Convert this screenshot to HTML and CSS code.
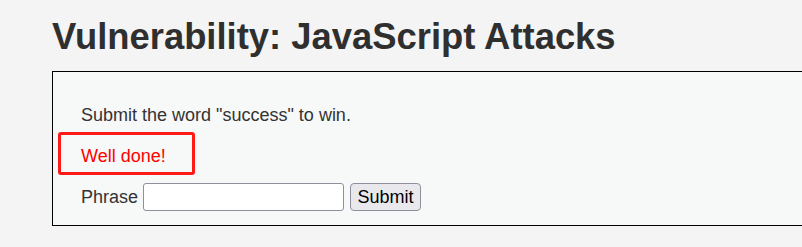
FILE: index.html
```html
<!DOCTYPE html>
<html lang="en">
<head>
    <meta charset="UTF-8">
    <title>Vulnerability: JavaScript Attacks</title>
    <link rel="stylesheet" href="styles.css">
</head>
<body>
    <div class="body-padded">
        <h1>Vulnerability: JavaScript Attacks</h1>

        <div class="vulnerable-code-area">
            <p class="intro">Submit the word "success" to win.</p>

            <div class="message">Well done!</div>

            <form name="low_js" class="phrase-row">
                <label for="phrase">Phrase</label>
                <input type="text" id="phrase" name="phrase">
                <button type="submit" id="send">Submit</button>
            </form>
        </div>
    </div>
</body>
</html>
```

FILE: styles.css
```css
html {
    overflow: hidden;
}

body {
    font-family: "Liberation Sans", Arial, sans-serif;
    background-color: #f4f4f4;
    color: #333;
    margin: 0;
    padding: 0;
}

.body-padded {
    padding-left: 52px;
}

h1 {
    font-size: 36.4px;
    font-weight: bold;
    color: #2f2f2f;
    margin: 16px 0 13px;
}

.vulnerable-code-area {
    background-color: #f7f8f8;
    border: 1px solid #000;
    margin-right: -20px;
    padding: 33px 0 14px 28px;
    font-size: 18px;
}

.intro {
    margin: 0;
}

.message {
    display: inline-block;
    width: 91px;
    margin: 6px 0 0 -23px;
    padding: 11px 20px 5px;
    border: 3px solid #ff1a1a;
    border-radius: 3px;
    color: #ff0000;
}

.phrase-row {
    display: flex;
    align-items: center;
    gap: 6px;
    margin-top: 8px;
}

.phrase-row label {
    margin-right: -1px;
}

.phrase-row input {
    width: 201px;
    height: 28px;
    box-sizing: border-box;
    border: 1px solid #8f8f9d;
    border-radius: 3px;
    background-color: #fff;
    font-family: inherit;
    font-size: 18px;
    padding: 0 4px;
}

.phrase-row button {
    width: 71px;
    height: 28px;
    box-sizing: border-box;
    border: 1px solid #8f8f9d;
    border-radius: 4px;
    background-color: #e9e9ed;
    color: #000;
    font-family: inherit;
    font-size: 18px;
    padding: 0 6px;
}
```
